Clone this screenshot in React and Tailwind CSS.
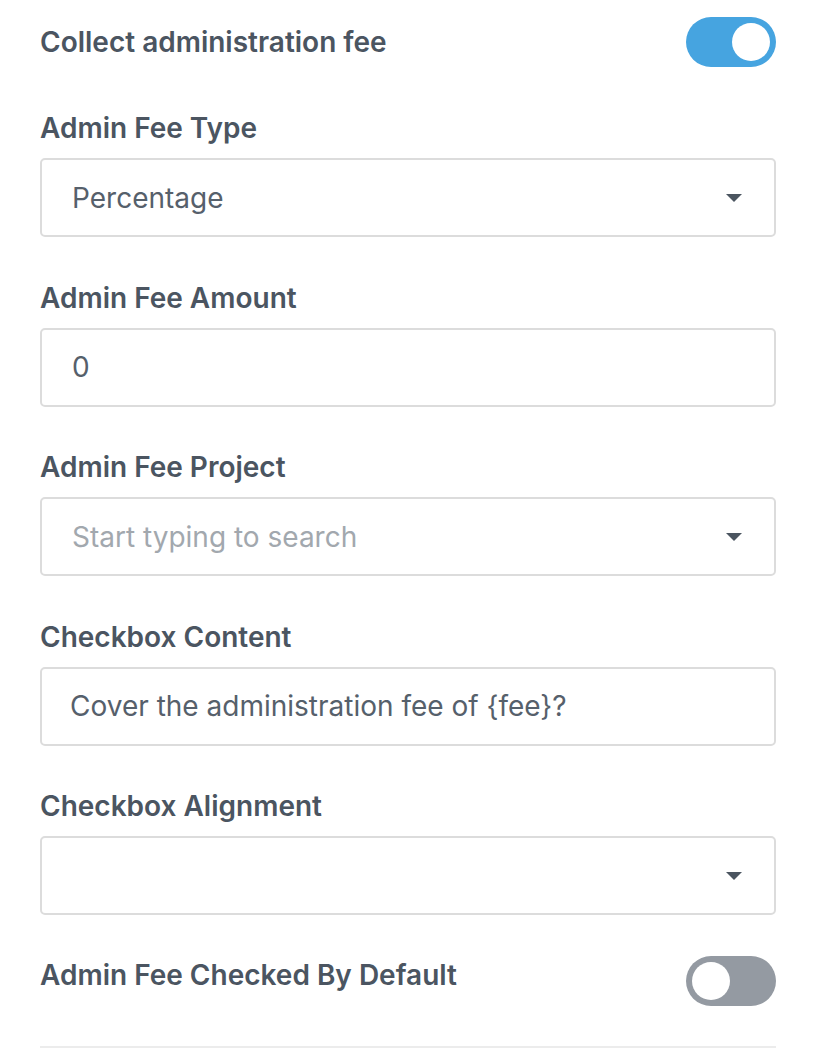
import React from "react";

function Toggle({ on }) {
  return (
    <div
      className={
        "flex h-[50px] w-[90px] shrink-0 items-center rounded-full px-[6px] " +
        (on ? "justify-end bg-[#46a4e0]" : "justify-start bg-[#949aa2]")
      }
    >
      <div className="h-[38px] w-[38px] rounded-full bg-white" />
    </div>
  );
}

function Caret() {
  return (
    <svg width="16" height="8" viewBox="0 0 16 8" className="shrink-0">
      <path d="M0 0 L16 0 L8 8 Z" fill="#4b5560" />
    </svg>
  );
}

function Label({ children }) {
  return (
    <div className="h-[36px] text-[28px] font-semibold leading-[36px] text-[#4b5561]">
      {children}
    </div>
  );
}

function Box({ children, select }) {
  return (
    <div className="mt-[12px] flex h-[79px] items-center justify-between rounded-[5px] border-2 border-[#dcdcdc] bg-white pl-[30px] pr-[32px]">
      <div className="text-[28px] leading-none">{children}</div>
      {select ? <Caret /> : null}
    </div>
  );
}

export default function App() {
  return (
    <div
      className="min-h-[1054px] w-[814px] bg-white pl-[40px] pr-[38px] pt-[17px]"
      style={{ fontFamily: "Inter, 'Noto Sans', sans-serif" }}
    >
      <div className="flex h-[50px] items-center justify-between">
        <div className="text-[28px] font-semibold text-[#4b5561]">Collect administration fee</div>
        <Toggle on />
      </div>

      <div className="mt-[43px]">
        <Label>Admin Fee Type</Label>
        <Box select>
          <span className="text-[#56606b]">Percentage</span>
        </Box>
      </div>

      <div className="mt-[42.5px]">
        <Label>Admin Fee Amount</Label>
        <Box>
          <span className="text-[#56606b]">0</span>
        </Box>
      </div>

      <div className="mt-[42.5px]">
        <Label>Admin Fee Project</Label>
        <Box select>
          <span className="text-[#a2a8ae]">Start typing to search</span>
        </Box>
      </div>

      <div className="mt-[42.5px]">
        <Label>Checkbox Content</Label>
        <Box>
          <span className="-ml-[2px] text-[#56606b]">Cover the administration fee of {"{fee}"}?</span>
        </Box>
      </div>

      <div className="mt-[42.5px]">
        <Label>Checkbox Alignment</Label>
        <Box select>
          <span />
        </Box>
      </div>

      <div className="mt-[41px] flex h-[50px] items-start justify-between">
        <div className="-mt-[6px] text-[28px] font-semibold leading-[50px] text-[#4b5561]">
          Admin Fee Checked By Default
        </div>
        <Toggle />
      </div>

      <div className="mt-[40px] h-[2px] bg-[#ececec]" />
    </div>
  );
}
